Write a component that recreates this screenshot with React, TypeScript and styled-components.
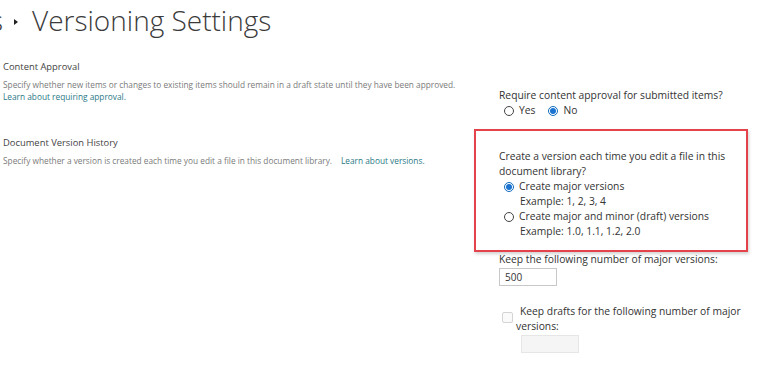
import React from "react";
import styled, { createGlobalStyle } from "styled-components";

const Global = createGlobalStyle`
  html, body { margin: 0; padding: 0; background: #ffffff; }
  body { font-family: "Open Sans", "Noto Sans", sans-serif; color: #333; overflow: hidden; }
`;

const Page = styled.div`
  width: 768px;
  height: 371px;
  overflow: hidden;
  background: #fff;
`;

const Header = styled.h1`
  margin: 0;
  height: 48px;
  display: flex;
  align-items: center;
  font-family: "Open Sans", sans-serif;
  font-weight: 300;
  font-size: 28px;
  color: #3b3b3b;
  white-space: nowrap;
  padding-bottom: 8px;
  box-sizing: border-box;
`;

const Crumb = styled.span`
  margin-left: -10px;
`;

const Chevron = styled.span`
  width: 0;
  height: 0;
  border-top: 3px solid transparent;
  border-bottom: 3px solid transparent;
  border-left: 4px solid #222;
  margin: 4px 14px 0 11px;
`;

const Section = styled.section<{ $height: number }>`
  display: grid;
  grid-template-columns: 474px 274px;
  height: ${(p) => p.$height}px;
`;

const LeftCell = styled.div<{ $top: number }>`
  padding: ${(p) => p.$top}px 0 0 3px;
`;

const RightCell = styled.div<{ $top: number }>`
  padding-top: ${(p) => p.$top}px;
`;

const SectionTitle = styled.div`
  font-size: 9.4px;
  line-height: 14px;
  color: #444;
  margin-bottom: 5px;
`;

const Description = styled.div`
  font-size: 8.3px;
  line-height: 12px;
  color: #7a7a7a;
  white-space: nowrap;
`;

const Link = styled.a<{ $gap?: number }>`
  color: #2a7886;
  text-decoration: none;
  margin-left: ${(p) => p.$gap ?? 0}px;
`;

const Group = styled.div<{ $pad?: number }>`
  padding-left: ${(p) => p.$pad ?? 25}px;
  font-size: 10.3px;
  line-height: 15px;
  color: #333;
`;

const Highlight = styled.div`
  border: 2px solid #e4434c;
  box-shadow: 1px 2px 3px rgba(0, 0, 0, 0.18);
  padding: 18px 0 11px 23px;
  font-size: 10.3px;
  line-height: 15px;
  color: #333;
  height: 123px;
  box-sizing: border-box;
`;

const RadioRow = styled.div<{ $inline?: boolean }>`
  display: ${(p) => (p.$inline ? "flex" : "block")};
  gap: 13px;
  padding-left: 5px;
`;

const RadioLabel = styled.label`
  display: flex;
  align-items: center;
  gap: 5px;
`;

const Radio = styled.span<{ $checked?: boolean }>`
  width: 10px;
  height: 10px;
  border-radius: 50%;
  box-sizing: border-box;
  border: 1px solid ${(p) => (p.$checked ? "#0f6cbd" : "#444")};
  display: inline-flex;
  align-items: center;
  justify-content: center;
  flex: none;
  &::after {
    content: "";
    width: 6px;
    height: 6px;
    border-radius: 50%;
    background: ${(p) => (p.$checked ? "#1a73d0" : "transparent")};
  }
`;

const Example = styled.div`
  padding-left: 16px;
`;

const NumberBox = styled.div<{ $disabled?: boolean }>`
  width: 58px;
  height: 18px;
  box-sizing: border-box;
  border: 1px solid ${(p) => (p.$disabled ? "#e6e6e6" : "#c8c8c8")};
  background: ${(p) => (p.$disabled ? "#f5f5f5" : "#fff")};
  font-size: 10px;
  line-height: 16px;
  padding-left: 5px;
  color: #333;
  margin-top: 1px;
`;

const CheckRow = styled.div`
  display: flex;
  align-items: flex-start;
  margin-top: 18px;
`;

const CheckBox = styled.span`
  width: 11px;
  height: 11px;
  box-sizing: border-box;
  border: 1px solid #d4d4d4;
  border-radius: 2px;
  background: #fafafa;
  margin: 8px 3px 0 3px;
  flex: none;
`;

const CheckText = styled.div`
  text-indent: 4px;
`;

const DisabledWrap = styled.div`
  padding-left: 22px;
  margin-top: 1px;
`;

export default function App() {
  return (
    <Page>
      <Global />
      <Header>
        <Crumb>s</Crumb>
        <Chevron />
        <span>Versioning Settings</span>
      </Header>

      <Section $height={81}>
        <LeftCell $top={12}>
          <SectionTitle>Content Approval</SectionTitle>
          <Description>
            Specify whether new items or changes to existing items should remain in a draft state until they have been approved.
            <br />
            <Link href="#">Learn about requiring approval.</Link>
          </Description>
        </LeftCell>
        <RightCell $top={40}>
          <Group>
            <div>Require content approval for submitted items?</div>
            <RadioRow $inline>
              <RadioLabel>
                <Radio />
                Yes
              </RadioLabel>
              <RadioLabel>
                <Radio $checked />
                No
              </RadioLabel>
            </RadioRow>
          </Group>
        </RightCell>
      </Section>

      <Section $height={242}>
        <LeftCell $top={7}>
          <SectionTitle>Document Version History</SectionTitle>
          <Description>
            Specify whether a version is created each time you edit a file in this document library.
            <Link href="#" $gap={9}>Learn about versions.</Link>
          </Description>
        </LeftCell>
        <RightCell $top={0}>
          <Highlight>
            <div>Create a version each time you edit a file in this document library?</div>
            <RadioRow>
              <RadioLabel>
                <Radio $checked />
                Create major versions
              </RadioLabel>
              <Example>Example: 1, 2, 3, 4</Example>
              <RadioLabel>
                <Radio />
                Create major and minor (draft) versions
              </RadioLabel>
              <Example>Example: 1.0, 1.1, 1.2, 2.0</Example>
            </RadioRow>
          </Highlight>
          <Group $pad={25}>
            <div>Keep the following number of major versions:</div>
            <NumberBox>500</NumberBox>
            <CheckRow>
              <CheckBox />
              <CheckText>
                Keep drafts for the following number of major
                <br />
                versions:
              </CheckText>
            </CheckRow>
            <DisabledWrap>
              <NumberBox $disabled />
            </DisabledWrap>
          </Group>
        </RightCell>
      </Section>
    </Page>
  );
}
